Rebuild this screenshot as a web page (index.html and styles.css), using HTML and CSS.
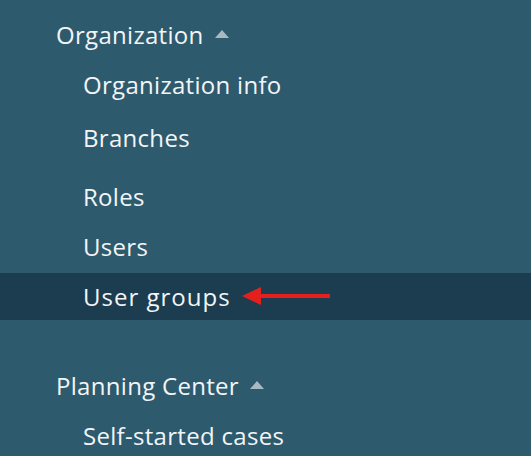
FILE: index.html
```html
<!DOCTYPE html>
<html>
<head>
<meta charset="utf-8">
<link rel="stylesheet" href="styles.css">
</head>
<body>
<nav class="menu">
  <div class="section first">
    <div class="head">Organization<span class="caret"></span></div>
    <div class="item">Organization info</div>
    <div class="item branches">Branches</div>
    <div class="item roles">Roles</div>
    <div class="item">Users</div>
    <div class="item active"><span class="label">User groups</span><svg class="arrow" width="90" height="20" viewBox="0 0 90 20"><polygon points="0,10 19,1 19,19" fill="#e3201d"/><rect x="17" y="8" width="71" height="4" fill="#e3201d"/></svg></div>
  </div>
  <div class="section second">
    <div class="head">Planning Center<span class="caret"></span></div>
    <div class="item">Self-started cases</div>
  </div>
</nav>
</body>
</html>
```
FILE: styles.css
```css
html, body {
  margin: 0;
  padding: 0;
  background: #2e5a6e;
  height: 100%;
}
body {
  font-family: "Open Sans", "DejaVu Sans", sans-serif;
  font-size: 24px;
  letter-spacing: 0.3px;
  color: #f2f5f7;
  overflow: hidden;
}
.menu {
  display: flex;
  flex-direction: column;
}
.section.first {
  padding-top: 10px;
}
.section.second {
  margin-top: 41px;
}
.head {
  height: 50px;
  line-height: 50px;
  padding-left: 56px;
  display: flex;
  align-items: center;
}
.caret {
  display: inline-block;
  width: 0;
  height: 0;
  border-left: 7px solid transparent;
  border-right: 7px solid transparent;
  border-bottom: 8px solid #a7bac4;
  margin-left: 11px;
  margin-top: -2px;
}
.item {
  height: 50px;
  line-height: 50px;
  padding-left: 83px;
  display: flex;
  align-items: center;
}
.item.branches {
  margin-top: 3px;
}
.item.roles {
  margin-top: 9px;
}
.item.active {
  margin-top: 1px;
  height: 47px;
  line-height: 47px;
  background: #1b3d4f;
}
.item.active .label {
  letter-spacing: 1px;
}
.arrow {
  margin-left: 11px;
  margin-top: -2px;
}
```
